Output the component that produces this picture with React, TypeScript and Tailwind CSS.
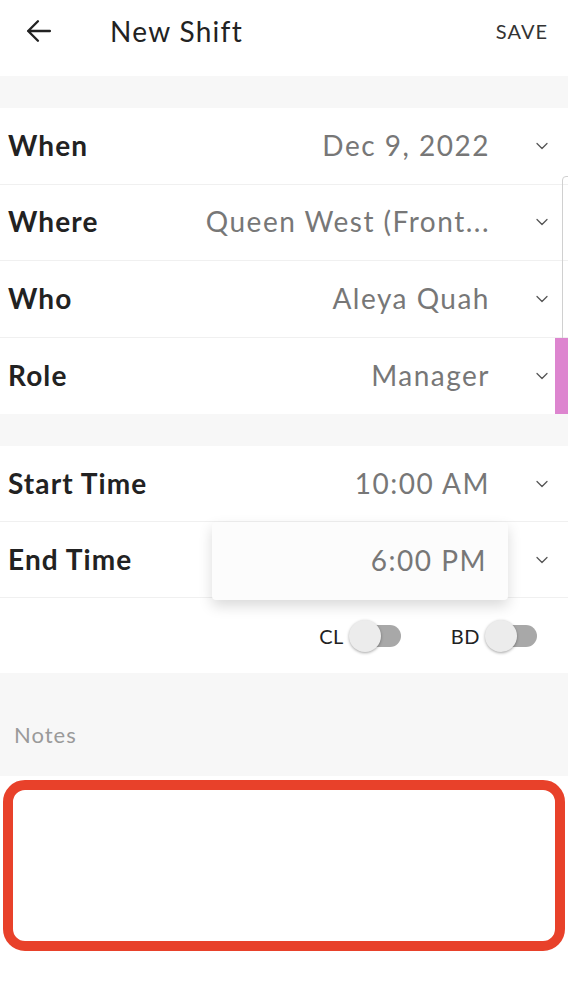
import { ChevronDown } from "lucide-react";

const font = { fontFamily: "Lato, 'Open Sans', sans-serif" };

const Row = ({ label, value, last, h }: { label: string; value: string; last?: boolean; h: string }) => (
  <div className={`flex items-center bg-white ${h} ${last ? "" : "border-b border-[#f0f0f0]"}`}>
    <span className="pl-2 pb-[2px] text-[28px] font-bold tracking-[1.1px] text-[#222]">{label}</span>
    <span className="ml-auto truncate pl-4 pb-[2px] text-[28px] tracking-[1.5px] text-[#777]">{value}</span>
    <ChevronDown className="ml-[42px] mr-[16px] h-[20px] w-[20px] shrink-0 text-[#555]" strokeWidth={1.5} />
  </div>
);

const Toggle = ({ label }: { label: string }) => (
  <div className="flex items-center gap-[6px]">
    <span className="text-[20px] tracking-[0.5px] text-[#222]">{label}</span>
    <div className="relative h-[22px] w-[51px] rounded-full bg-[#a8a8a8]">
      <div className="absolute -top-[5px] -left-[1px] h-[32px] w-[32px] rounded-full bg-[#ececec] shadow-[0_1px_3px_rgba(0,0,0,0.35)]" />
    </div>
  </div>
);

const App = () => {
  return (
    <div className="relative h-[996px] w-[568px] overflow-hidden bg-white" style={font}>
      {/* header */}
      <div className="flex h-[76px] items-center pb-[14px]">
        <svg className="ml-[26px] h-[26px] w-[26px]" viewBox="0 0 24 24" fill="none" stroke="#222" strokeWidth={2.2} strokeLinecap="round" strokeLinejoin="round">
          <path d="M22 12H2M11 3l-9 9 9 9" />
        </svg>
        <span className="ml-[58px] text-[28px] tracking-[1.3px] text-[#222]">New Shift</span>
        <span className="ml-auto mr-[20px] text-[20px] tracking-[1px] text-[#333]">SAVE</span>
      </div>

      <div className="h-[32px] bg-[#f7f7f7]" />

      <div className="relative">
        <Row h="h-[76.5px]" label="When" value="Dec 9, 2022" />
        <Row h="h-[76.5px]" label="Where" value="Queen West (Front..." />
        <Row h="h-[76.5px]" label="Who" value="Aleya Quah" />
        <Row h="h-[76.5px]" label="Role" value="Manager" last />
        {/* scroll indicator */}
        <div className="absolute right-[-6px] top-[68px] h-[180px] w-[12px] rounded-[4px] border border-[#d0d0d0]" />
        <div className="absolute right-0 top-[230px] h-[76px] w-[13px] bg-[#dd85cf]" />
      </div>

      <div className="h-[32px] bg-[#f7f7f7]" />

      <div className="relative">
        <Row h="h-[76px]" label="Start Time" value="10:00 AM" />
        <Row h="h-[76px]" label="End Time" value="" />
        <div className="absolute left-[212px] top-[76px] flex h-[78px] w-[296px] items-center justify-end rounded-[4px] bg-[#fcfcfc] pb-[2px] pr-[21px] shadow-[0_6px_14px_rgba(0,0,0,0.15)]">
          <span className="text-[28px] tracking-[1.5px] text-[#777]">6:00 PM</span>
        </div>
        <div className="flex h-[75px] items-center justify-end gap-[50px] bg-white pr-[31px]">
          <Toggle label="CL" />
          <Toggle label="BD" />
        </div>
      </div>

      <div className="flex h-[103px] items-end bg-[#f7f7f7] pb-[25px] pl-[14px]">
        <span className="text-[22px] tracking-[1px] text-[#9a9a9a]">Notes</span>
      </div>

      <div className="px-[3px] pt-[4px]">
        <div className="h-[171px] rounded-[22px] border-[10px] border-[#e8412a] bg-white" />
      </div>
    </div>
  );
};

export default App;
